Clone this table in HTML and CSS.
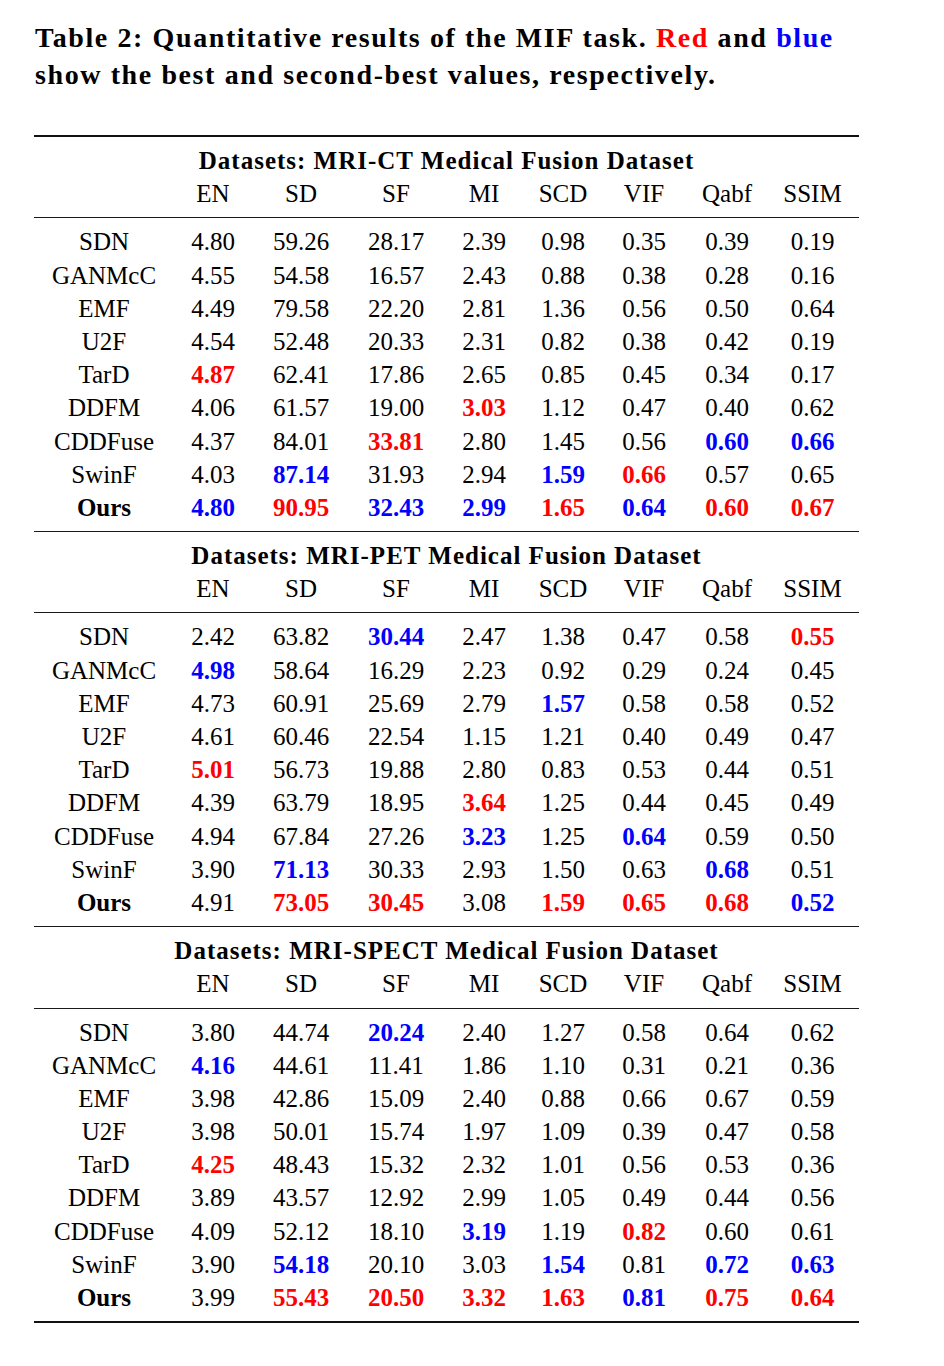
FILE: index.html
```html
<!DOCTYPE html>
<html lang="en">
<head>
<meta charset="utf-8">
<title>Table 2</title>
<link rel="stylesheet" href="styles.css">
</head>
<body>
<div class="page">
  <p class="caption">Table 2: Quantitative results of the MIF task. <span class="r">Red</span> and <span class="b">blue</span><br>show the best and second-best values, respectively.</p>

  <div class="table">
    <div class="sec head first">
      <div class="ds">Datasets: MRI-CT Medical Fusion Dataset</div>
      <div></div><div>EN</div><div>SD</div><div>SF</div><div>MI</div><div>SCD</div><div>VIF</div><div>Qabf</div><div>SSIM</div>
    </div>
    <div class="sec body">
      <div>SDN</div><div>4.80</div><div>59.26</div><div>28.17</div><div>2.39</div><div>0.98</div><div>0.35</div><div>0.39</div><div>0.19</div>
      <div>GANMcC</div><div>4.55</div><div>54.58</div><div>16.57</div><div>2.43</div><div>0.88</div><div>0.38</div><div>0.28</div><div>0.16</div>
      <div>EMF</div><div>4.49</div><div>79.58</div><div>22.20</div><div>2.81</div><div>1.36</div><div>0.56</div><div>0.50</div><div>0.64</div>
      <div>U2F</div><div>4.54</div><div>52.48</div><div>20.33</div><div>2.31</div><div>0.82</div><div>0.38</div><div>0.42</div><div>0.19</div>
      <div>TarD</div><div class="r">4.87</div><div>62.41</div><div>17.86</div><div>2.65</div><div>0.85</div><div>0.45</div><div>0.34</div><div>0.17</div>
      <div>DDFM</div><div>4.06</div><div>61.57</div><div>19.00</div><div class="r">3.03</div><div>1.12</div><div>0.47</div><div>0.40</div><div>0.62</div>
      <div>CDDFuse</div><div>4.37</div><div>84.01</div><div class="r">33.81</div><div>2.80</div><div>1.45</div><div>0.56</div><div class="b">0.60</div><div class="b">0.66</div>
      <div>SwinF</div><div>4.03</div><div class="b">87.14</div><div>31.93</div><div>2.94</div><div class="b">1.59</div><div class="r">0.66</div><div>0.57</div><div>0.65</div>
      <div class="ours">Ours</div><div class="b">4.80</div><div class="r">90.95</div><div class="b">32.43</div><div class="b">2.99</div><div class="r">1.65</div><div class="b">0.64</div><div class="r">0.60</div><div class="r">0.67</div>
    </div>

    <div class="sec head">
      <div class="ds">Datasets: MRI-PET Medical Fusion Dataset</div>
      <div></div><div>EN</div><div>SD</div><div>SF</div><div>MI</div><div>SCD</div><div>VIF</div><div>Qabf</div><div>SSIM</div>
    </div>
    <div class="sec body">
      <div>SDN</div><div>2.42</div><div>63.82</div><div class="b">30.44</div><div>2.47</div><div>1.38</div><div>0.47</div><div>0.58</div><div class="r">0.55</div>
      <div>GANMcC</div><div class="b">4.98</div><div>58.64</div><div>16.29</div><div>2.23</div><div>0.92</div><div>0.29</div><div>0.24</div><div>0.45</div>
      <div>EMF</div><div>4.73</div><div>60.91</div><div>25.69</div><div>2.79</div><div class="b">1.57</div><div>0.58</div><div>0.58</div><div>0.52</div>
      <div>U2F</div><div>4.61</div><div>60.46</div><div>22.54</div><div>1.15</div><div>1.21</div><div>0.40</div><div>0.49</div><div>0.47</div>
      <div>TarD</div><div class="r">5.01</div><div>56.73</div><div>19.88</div><div>2.80</div><div>0.83</div><div>0.53</div><div>0.44</div><div>0.51</div>
      <div>DDFM</div><div>4.39</div><div>63.79</div><div>18.95</div><div class="r">3.64</div><div>1.25</div><div>0.44</div><div>0.45</div><div>0.49</div>
      <div>CDDFuse</div><div>4.94</div><div>67.84</div><div>27.26</div><div class="b">3.23</div><div>1.25</div><div class="b">0.64</div><div>0.59</div><div>0.50</div>
      <div>SwinF</div><div>3.90</div><div class="b">71.13</div><div>30.33</div><div>2.93</div><div>1.50</div><div>0.63</div><div class="b">0.68</div><div>0.51</div>
      <div class="ours">Ours</div><div>4.91</div><div class="r">73.05</div><div class="r">30.45</div><div>3.08</div><div class="r">1.59</div><div class="r">0.65</div><div class="r">0.68</div><div class="b">0.52</div>
    </div>

    <div class="sec head">
      <div class="ds">Datasets: MRI-SPECT Medical Fusion Dataset</div>
      <div></div><div>EN</div><div>SD</div><div>SF</div><div>MI</div><div>SCD</div><div>VIF</div><div>Qabf</div><div>SSIM</div>
    </div>
    <div class="sec body last">
      <div>SDN</div><div>3.80</div><div>44.74</div><div class="b">20.24</div><div>2.40</div><div>1.27</div><div>0.58</div><div>0.64</div><div>0.62</div>
      <div>GANMcC</div><div class="b">4.16</div><div>44.61</div><div>11.41</div><div>1.86</div><div>1.10</div><div>0.31</div><div>0.21</div><div>0.36</div>
      <div>EMF</div><div>3.98</div><div>42.86</div><div>15.09</div><div>2.40</div><div>0.88</div><div>0.66</div><div>0.67</div><div>0.59</div>
      <div>U2F</div><div>3.98</div><div>50.01</div><div>15.74</div><div>1.97</div><div>1.09</div><div>0.39</div><div>0.47</div><div>0.58</div>
      <div>TarD</div><div class="r">4.25</div><div>48.43</div><div>15.32</div><div>2.32</div><div>1.01</div><div>0.56</div><div>0.53</div><div>0.36</div>
      <div>DDFM</div><div>3.89</div><div>43.57</div><div>12.92</div><div>2.99</div><div>1.05</div><div>0.49</div><div>0.44</div><div>0.56</div>
      <div>CDDFuse</div><div>4.09</div><div>52.12</div><div>18.10</div><div class="b">3.19</div><div>1.19</div><div class="r">0.82</div><div>0.60</div><div>0.61</div>
      <div>SwinF</div><div>3.90</div><div class="b">54.18</div><div>20.10</div><div>3.03</div><div class="b">1.54</div><div>0.81</div><div class="b">0.72</div><div class="b">0.63</div>
      <div class="ours">Ours</div><div>3.99</div><div class="r">55.43</div><div class="r">20.50</div><div class="r">3.32</div><div class="r">1.63</div><div class="b">0.81</div><div class="r">0.75</div><div class="r">0.64</div>
    </div>
  </div>
</div>
</body>
</html>
```

FILE: styles.css
```css
html, body {
  margin: 0;
  padding: 0;
  background: #ffffff;
}

body {
  font-family: "Liberation Serif", "Times New Roman", serif;
  color: #000;
}

.page {
  padding: 19px 0 0 34px;
}

.caption {
  margin: 0 0 0 1px;
  font-size: 28px;
  line-height: 37px;
  letter-spacing: 1.6px;
  font-weight: bold;
}

.caption .r { color: #ff0000; }
.caption .b { color: #0000ff; }

.table {
  margin-top: 42px;
  width: 825px;
  font-size: 25px;
}

.sec {
  display: grid;
  grid-template-columns: 140px 78px 98px 92px 84px 74px 88px 78px 93px;
  grid-auto-rows: 33.2px;
  align-items: center;
  justify-items: center;
  line-height: 33.2px;
  padding: 7px 0;
  border-top: 1px solid #1a1a1a;
}

.sec.first {
  border-top: 2px solid #111;
}

.sec.last {
  border-bottom: 2px solid #111;
}

.ds {
  grid-column: 1 / -1;
  font-weight: bold;
  letter-spacing: 1px;
}

.ours {
  font-weight: bold;
}

.body .r {
  color: #ff0000;
  font-weight: bold;
}

.body .b {
  color: #0000ff;
  font-weight: bold;
}
```
